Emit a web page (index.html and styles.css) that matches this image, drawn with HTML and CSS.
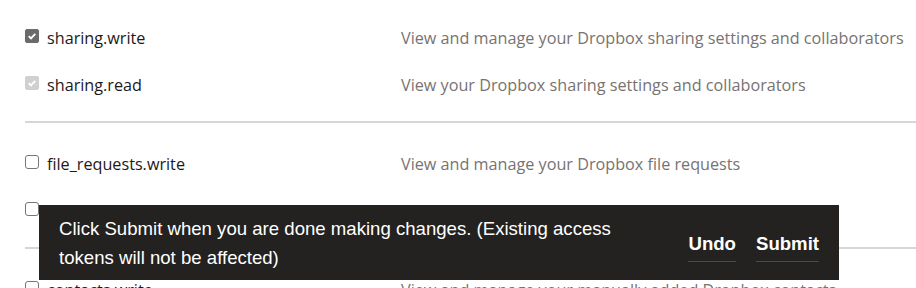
FILE: index.html
```html
<!DOCTYPE html>
<html>
<head>
<meta charset="utf-8">
<link rel="stylesheet" href="styles.css">
</head>
<body>
<div class="scopes">
  <div class="section first">
    <div class="row">
      <span class="cb checked"><svg viewBox="0 0 14 14"><path d="M3.2 7.2l2.6 2.6L10.8 4.6" fill="none" stroke="#fff" stroke-width="2.2"/></svg></span>
      <span class="name">sharing.write</span>
      <span class="desc">View and manage your Dropbox sharing settings and collaborators</span>
    </div>
    <div class="row">
      <span class="cb disabled"><svg viewBox="0 0 14 14"><path d="M3.2 7.2l2.6 2.6L10.8 4.6" fill="none" stroke="#fff" stroke-width="2.2"/></svg></span>
      <span class="name">sharing.read</span>
      <span class="desc">View your Dropbox sharing settings and collaborators</span>
    </div>
  </div>
  <div class="section">
    <div class="row">
      <span class="cb"></span>
      <span class="name">file_requests.write</span>
      <span class="desc">View and manage your Dropbox file requests</span>
    </div>
    <div class="row">
      <span class="cb"></span>
      <span class="name">file_requests.read</span>
      <span class="desc">View your Dropbox file requests</span>
    </div>
  </div>
  <div class="section">
    <div class="row">
      <span class="cb"></span>
      <span class="name">contacts.write</span>
      <span class="desc">View and manage your manually added Dropbox contacts</span>
    </div>
  </div>
</div>
<div class="toast">
  <p class="toast-text">Click Submit when you are done making changes. (Existing access tokens will not be affected)</p>
  <div class="toast-actions">
    <button class="toast-btn">Undo</button>
    <button class="toast-btn">Submit</button>
  </div>
</div>
</body>
</html>
```
FILE: styles.css
```css
html, body {
  margin: 0;
  padding: 0;
  background: #fff;
  overflow: hidden;
}
body {
  font-family: "Open Sans", "DejaVu Sans", sans-serif;
  font-size: 16.2px;
  color: #1e1919;
}
.scopes {
  padding-left: 25px;
}
.section {
  padding: 17px 0 13px;
  border-bottom: 2px solid #d6d6d6;
}
.section.first {
  padding-top: 14px;
}
.section + .section {
  padding-top: 17px;
}
.row {
  display: grid;
  grid-template-columns: 14px 346px 1fr;
  column-gap: 8px;
  align-items: center;
  height: 47px;
}
.cb {
  width: 14px;
  height: 14px;
  box-sizing: border-box;
  border: 1px solid #767676;
  border-radius: 3px;
  background: #fff;
  display: block;
  margin-top: -3px;
}
.cb svg {
  display: block;
  width: 12px;
  height: 12px;
}
.cb.checked {
  background: #6b6b6b;
  border-color: #6b6b6b;
  border-radius: 2px;
}
.cb.disabled {
  background: #d0d0d0;
  border-color: #d0d0d0;
  border-radius: 2px;
}
.name {
  white-space: nowrap;
}
.desc {
  color: #777372;
  white-space: nowrap;
}
.toast {
  position: fixed;
  left: 39px;
  top: 205px;
  width: 800px;
  height: 75px;
  box-sizing: border-box;
  padding: 0 20px;
  background: #232220;
  color: #fff;
  display: flex;
  align-items: center;
  justify-content: space-between;
  font-family: "Liberation Sans", Arial, sans-serif;
  font-size: 18.6px;
}
.toast-text {
  margin: 0;
  width: 590px;
  line-height: 29px;
}
.toast-actions {
  display: flex;
  gap: 20px;
  padding-top: 10px;
}
.toast-btn {
  font-family: "Liberation Sans", Arial, sans-serif;
  font-size: 18.6px;
  font-weight: bold;
  color: #fff;
  background: none;
  border: 0;
  border-bottom: 1px solid #4a4947;
  padding: 0 0 6px;
  margin: 0;
  line-height: 22px;
}
```
